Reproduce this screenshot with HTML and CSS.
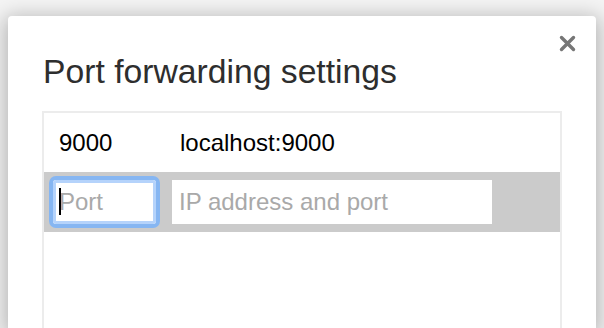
FILE: index.html
```html
<!DOCTYPE html>
<html>
<head>
<meta charset="utf-8">
<link rel="stylesheet" href="styles.css">
</head>
<body>
<div class="dialog">
  <button class="close" aria-label="Close">
    <svg width="17" height="17" viewBox="0 0 17 17"><path d="M2.5 2.5 L14.5 14.5 M14.5 2.5 L2.5 14.5" stroke="#767676" stroke-width="3.4" stroke-linecap="round"/></svg>
  </button>
  <h1 class="title">Port forwarding settings</h1>
  <div class="list">
    <div class="row">
      <span class="port">9000</span>
      <span class="addr">localhost:9000</span>
    </div>
    <div class="row edit">
      <span class="port-wrap">
        <input class="field port-field" placeholder="Port">
        <span class="caret"></span>
      </span>
      <input class="field addr-field" placeholder="IP address and port">
    </div>
  </div>
</div>
</body>
</html>
```
FILE: styles.css
```css
html, body {
  margin: 0;
  height: 100%;
  overflow: hidden;
}
body {
  background: #f4f4f4;
  padding: 16px 8px 0 8px;
  box-sizing: border-box;
  font-family: "Liberation Sans", Arial, sans-serif;
}
.dialog {
  position: relative;
  background: #fff;
  border-radius: 4px 4px 0 0;
  height: 312px;
  padding: 0 34px;
  box-shadow: 0 4px 20px 4px rgba(0, 0, 0, 0.25);
  overflow: hidden;
}
.close {
  position: absolute;
  top: 19px;
  right: 20px;
  width: 17px;
  height: 17px;
  padding: 0;
  border: 0;
  background: none;
}
.close svg { display: block; }
.title {
  margin: 0;
  padding-top: 35px;
  font-size: 33.7px;
  line-height: 40px;
  font-weight: normal;
  color: #2e2e2e;
  padding-left: 1px;
}
.list {
  margin-top: 20px;
  border: 2px solid #ececec;
  height: 300px;
}
.row {
  display: flex;
  align-items: center;
  height: 59px;
  padding-left: 15px;
  font-size: 24px;
  color: #000;
}
.port { width: 121px; }
.row.edit {
  height: 60px;
  padding-left: 9px;
  background: #cbcbcb;
}
.port-wrap {
  position: relative;
  display: block;
  margin-right: 16px;
}
.field {
  display: block;
  box-sizing: border-box;
  height: 44px;
  border: 0;
  margin: 0;
  background: #fff;
  font-family: "Liberation Sans", Arial, sans-serif;
  font-size: 24px;
  color: #000;
  outline: none;
  caret-color: transparent;
}
.field::placeholder { color: #a9a9a9; }
.port-field {
  width: 103px;
  padding: 0 0 0 6px;
  border-radius: 3px;
  box-shadow: 0 0 0 4px #86b6f2, inset 0 0 0 3px #b5d3fb;
}
.caret {
  position: absolute;
  left: 6px;
  top: 8px;
  width: 2px;
  height: 27px;
  background: #000;
}
.addr-field {
  width: 320px;
  padding: 0 0 0 7px;
}
```
